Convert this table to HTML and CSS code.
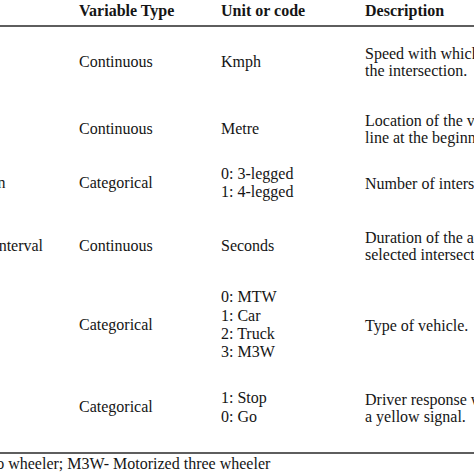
FILE: index.html
```html
<!DOCTYPE html>
<html lang="en">
<head>
<meta charset="utf-8">
<title>Variables</title>
<link rel="stylesheet" href="styles.css">
</head>
<body>
<div class="sheet">
  <table class="vars">
    <thead>
      <tr class="head">
        <th class="c1">Variable</th>
        <th class="c2">Variable Type</th>
        <th class="c3">Unit or code</th>
        <th class="c4">Description</th>
      </tr>
    </thead>
    <tbody>
      <tr class="r1">
        <td class="c1">Speed</td>
        <td class="c2">Continuous</td>
        <td class="c3">Kmph</td>
        <td class="c4">Speed with which vehicle approaches<br>the intersection.</td>
      </tr>
      <tr class="r2">
        <td class="c1">Distance</td>
        <td class="c2">Continuous</td>
        <td class="c3">Metre</td>
        <td class="c4">Location of the vehicle from the stop<br>line at the beginning of yellow signal.</td>
      </tr>
      <tr class="r3">
        <td class="c1">Type of junction</td>
        <td class="c2">Categorical</td>
        <td class="c3 stack">0: 3-legged<br>1: 4-legged</td>
        <td class="c4">Number of intersection legs.</td>
      </tr>
      <tr class="r4">
        <td class="c1">Signal change interval</td>
        <td class="c2">Continuous</td>
        <td class="c3">Seconds</td>
        <td class="c4">Duration of the amber signal at the<br>selected intersection.</td>
      </tr>
      <tr class="r5">
        <td class="c1">Vehicle type</td>
        <td class="c2">Categorical</td>
        <td class="c3 stack">0: MTW<br>1: Car<br>2: Truck<br>3: M3W</td>
        <td class="c4">Type of vehicle.</td>
      </tr>
      <tr class="r6">
        <td class="c1">Decision</td>
        <td class="c2">Categorical</td>
        <td class="c3 stack">1: Stop<br>0: Go</td>
        <td class="c4">Driver response when encountered<br>a yellow signal.</td>
      </tr>
    </tbody>
  </table>
  <p class="note">MTW- Motorized two wheeler; M3W- Motorized three wheeler</p>
</div>
</body>
</html>
```
FILE: styles.css
```css
html, body {
  margin: 0;
  padding: 0;
  background: #ffffff;
  overflow: hidden;
}

body {
  width: 474px;
  height: 474px;
  font-family: "Liberation Serif", "Times New Roman", serif;
  font-size: 16px;
  color: #151515;
}

.sheet {
  margin-left: -138px;
  padding-top: 2px;
  width: 760px;
}

.vars {
  border-collapse: collapse;
  border-bottom: 2px solid #5e5e5e;
  table-layout: fixed;
  width: 760px;
}

.vars th,
.vars td {
  padding: 0;
  text-align: left;
  white-space: nowrap;
  line-height: 18.3px;
}

.vars th {
  font-weight: bold;
  vertical-align: top;
  padding-top: 0;
}

.vars td {
  vertical-align: middle;
}

.head {
  height: 24px;
}

.head th {
  border-bottom: 2px solid #5e5e5e;
}

.c1 { width: 179px; padding-left: 38px !important; }
.c2 { width: 142px; }
.c3 { width: 144px; }
.c4 { width: auto; }

.vars td.c4 {
  line-height: 17px;
}

.r1 { height: 71px; }
.r2 { height: 64px; }
.r3 { height: 44px; }
.r4 { height: 82px; }
.r5 { height: 76px; }
.r6 { height: 90px; }

.note {
  margin: 1px 0 0 0;
  line-height: 18px;
  white-space: nowrap;
}
```
